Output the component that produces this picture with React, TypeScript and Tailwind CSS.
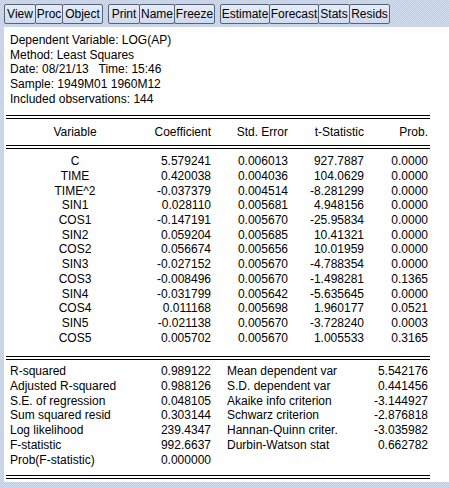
const toolbar: [string, number][][] = [
  [["View", 32], ["Proc", 28], ["Object", 41]],
  [["Print", 32], ["Name", 36], ["Freeze", 41]],
  [["Estimate", 50], ["Forecast", 50], ["Stats", 32], ["Resids", 41]],
];

const header = [
  "Dependent Variable: LOG(AP)",
  "Method: Least Squares",
  "Date: 08/21/13   Time: 15:46",
  "Sample: 1949M01 1960M12",
  "Included observations: 144",
];

const coefs = [
  ["C", "5.579241", "0.006013", "927.7887", "0.0000"],
  ["TIME", "0.420038", "0.004036", "104.0629", "0.0000"],
  ["TIME^2", "-0.037379", "0.004514", "-8.281299", "0.0000"],
  ["SIN1", "0.028110", "0.005681", "4.948156", "0.0000"],
  ["COS1", "-0.147191", "0.005670", "-25.95834", "0.0000"],
  ["SIN2", "0.059204", "0.005685", "10.41321", "0.0000"],
  ["COS2", "0.056674", "0.005656", "10.01959", "0.0000"],
  ["SIN3", "-0.027152", "0.005670", "-4.788354", "0.0000"],
  ["COS3", "-0.008496", "0.005670", "-1.498281", "0.1365"],
  ["SIN4", "-0.031799", "0.005642", "-5.635645", "0.0000"],
  ["COS4", "0.011168", "0.005698", "1.960177", "0.0521"],
  ["SIN5", "-0.021138", "0.005670", "-3.728240", "0.0003"],
  ["COS5", "0.005702", "0.005670", "1.005533", "0.3165"],
];

const stats = [
  ["R-squared", "0.989122", "Mean dependent var", "5.542176"],
  ["Adjusted R-squared", "0.988126", "S.D. dependent var", "0.441456"],
  ["S.E. of regression", "0.048105", "Akaike info criterion", "-3.144927"],
  ["Sum squared resid", "0.303144", "Schwarz criterion", "-2.876818"],
  ["Log likelihood", "239.4347", "Hannan-Quinn criter.", "-3.035982"],
  ["F-statistic", "992.6637", "Durbin-Watson stat", "0.662782"],
  ["Prob(F-statistic)", "0.000000", "", ""],
];

const dither =
  "bg-[repeating-conic-gradient(#bccbe6_0_25%,#d3def1_0_50%)] bg-[length:2px_2px]";

function DoubleLine() {
  return <div className="h-[4px] w-[424px] border-y border-black" />;
}

export default function App() {
  return (
    <div
      className={`w-[449px] h-[488px] flex flex-col text-[12px] text-black ${dither}`}
      style={{ fontFamily: '"Liberation Sans", Arial, sans-serif' }}
    >
      {/* toolbar */}
      <div className="h-[27px] pt-[4px] pl-[4px] flex gap-[6px]">
        {toolbar.map((group, gi) => (
          <div key={gi} className="flex">
            {group.map(([label, w]) => (
              <div
                key={label}
                style={{ width: w }}
                className="h-[20px] -mr-px flex items-center justify-center border border-[#56627a] rounded-[2px] bg-gradient-to-b from-[#e6edf8] to-[#cfdaee] leading-none"
              >
                {label}
              </div>
            ))}
          </div>
        ))}
      </div>

      {/* output */}
      <div className="ml-[4px] flex-1 bg-white pt-[6px] pl-[2px] leading-[14.7px]">
        <div className="pl-[4px] whitespace-pre">
          {header.map((h) => (
            <div key={h}>{h}</div>
          ))}
        </div>

        <div className="mt-[8px]">
          <DoubleLine />
          <div className="grid grid-cols-[138px_67px_77px_76px_64px] py-[6px] text-right">
            <div className="text-center">Variable</div>
            <div>Coefficient</div>
            <div>Std. Error</div>
            <div>t-Statistic</div>
            <div>Prob.</div>
          </div>
          <DoubleLine />
          <div className="grid grid-cols-[138px_67px_77px_76px_64px] pt-[5px] pb-[11px] text-right">
            {coefs.map((r) =>
              r.map((c, i) => (
                <div key={r[0] + i} className={i === 0 ? "text-center" : ""}>
                  {c}
                </div>
              ))
            )}
          </div>
          <DoubleLine />
          <div className="pt-[4px] pb-[8px]">
            {stats.map((s) => (
              <div key={s[0]} className="flex">
                <div className="w-[205px] pl-[4px] flex justify-between">
                  <span>{s[0]}</span>
                  <span>{s[1]}</span>
                </div>
                <div className="w-[217px] pl-[16px] flex justify-between">
                  <span>{s[2]}</span>
                  <span>{s[3]}</span>
                </div>
              </div>
            ))}
          </div>
          <DoubleLine />
        </div>
      </div>
      <div className="h-[6px]" />
    </div>
  );
}
